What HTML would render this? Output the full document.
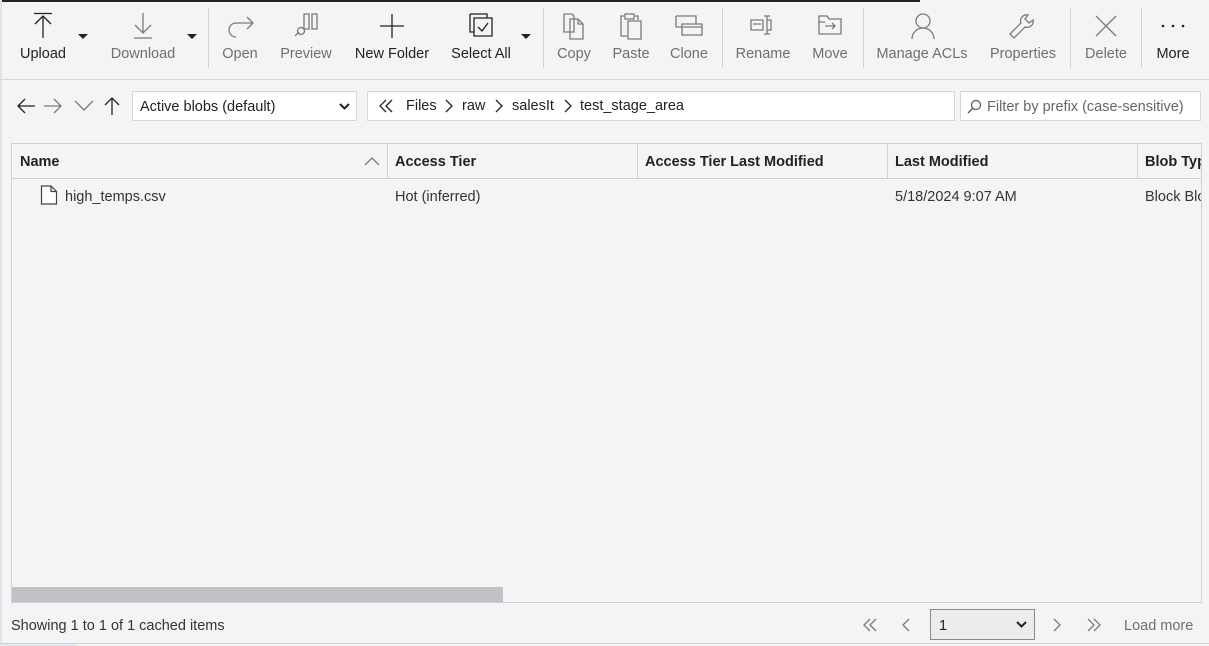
<!DOCTYPE html>
<html><head><meta charset="utf-8"><style>
*{box-sizing:border-box;margin:0;padding:0}
body{width:1209px;height:646px;background:#f4f4f4;font-family:"Liberation Sans",sans-serif;font-size:14px;color:#222;position:relative;overflow:hidden}
.a{position:absolute}
.lbl{position:absolute;top:46px;font-size:14.5px;transform:translateX(-50%);white-space:nowrap;color:#6f6f6f}
.en{color:#222}
.sep{position:absolute;top:8px;width:1px;height:60px;background:#d4d4da}
svg{position:absolute;overflow:visible}
.ic{fill:none;stroke:#7a7a7a;stroke-width:1.3}
.ice{fill:none;stroke:#222;stroke-width:1.3}
.th{position:absolute;top:145px;height:34px;line-height:34px;font-weight:bold;padding-left:8px;font-size:14.5px}
.cs{position:absolute;top:144px;width:1px;height:34px;background:#d0d0dc}
.bc{position:absolute;top:98px;font-size:14.5px}
</style></head><body>
<div class="a" style="left:0;top:0;width:920px;height:2px;background:#222"></div>
<div class="a" style="left:0;top:0;width:2px;height:646px;background:#dfe3ee"></div>
<div class="a" style="left:0;top:79px;width:1209px;height:1px;background:#d6d6dc"></div>

<svg style="left:30px;top:12px" width="26" height="28"><path class="ice" d="M4 1.5H22M13 4V26M5 12L13 4L21 12"/></svg>
<svg style="left:78px;top:34px" width="10" height="6"><path d="M0 0H10L5 5Z" fill="#222"/></svg>
<svg style="left:130px;top:12px" width="26" height="28"><path class="ic" d="M13 1V21M5 13L13 21L21 13M4 26H22"/></svg>
<svg style="left:187px;top:34px" width="10" height="6"><path d="M0 0H10L5 5Z" fill="#222"/></svg>
<div class="sep" style="left:208px"></div>
<svg style="left:227px;top:14px" width="28" height="24"><path class="ic" d="M26 9H9A7 7 0 0 0 9 23M20 3L26 9L20 15"/></svg>
<svg style="left:294px;top:12px" width="26" height="26"><path class="ic" d="M10 2H15V17H10ZM18 2H23V17H18ZM5 20L1 24"/><circle class="ic" cx="7" cy="19" r="3.5"/></svg>
<svg style="left:379px;top:13px" width="26" height="26"><path class="ice" d="M13 1V25M1 13H25"/></svg>
<svg style="left:468px;top:12px" width="28" height="28"><path class="ice" d="M2 2H19V6M6 6H24V24H6ZM2 2V20H6M10 15L14 19L20 11"/></svg>
<svg style="left:521px;top:34px" width="10" height="6"><path d="M0 0H10L5 5Z" fill="#222"/></svg>
<div class="sep" style="left:543px"></div>
<svg style="left:562px;top:12px" width="26" height="28"><path class="ic" d="M2 2H10L12 4V20H2ZM8 7H16L21 12V27H8ZM16 7V12H21"/></svg>
<svg style="left:618px;top:12px" width="26" height="28"><path class="ic" d="M6 4H3V24H9M17 4H20V8M7 2H16V7H7ZM10 9H23V27H10Z"/></svg>
<svg style="left:674px;top:14px" width="30" height="24"><path class="ic" d="M2 2H22V10M2 2V13H8M8 10H28V21H8ZM8 13H28"/></svg>
<div class="sep" style="left:722px"></div>
<svg style="left:749px;top:14px" width="30" height="24"><path class="ic" d="M2 6H14V16H2ZM4 10H12M18 6H22V16H18M15 2H21M15 20H21M18 2V20"/></svg>
<svg style="left:817px;top:14px" width="28" height="24"><path class="ic" d="M2 2H10L12 5H24V20H2ZM2 8H8M8 12H18M15 9L18 12L15 15"/></svg>
<div class="sep" style="left:863px"></div>
<svg style="left:910px;top:12px" width="26" height="28"><circle class="ic" cx="13" cy="9" r="7"/><path class="ic" d="M2 27A11 11 0 0 1 24 27"/></svg>
<svg style="left:1008px;top:12px" width="28" height="28"><path class="ic" d="M2 22L13 11A6 6 0 0 1 20 3L17 7L21 11L25 8A6 6 0 0 1 17 15L6 26Z"/></svg>
<div class="sep" style="left:1070px"></div>
<svg style="left:1095px;top:15px" width="22" height="22"><path class="ic" d="M1 1L21 21M21 1L1 21"/></svg>
<div class="sep" style="left:1141px"></div>
<svg style="left:1160px;top:24px" width="28" height="4"><circle cx="3" cy="2" r="1.3" fill="#222"/><circle cx="13" cy="2" r="1.3" fill="#222"/><circle cx="23" cy="2" r="1.3" fill="#222"/></svg>

<div class="lbl en" style="left:43px">Upload</div>
<div class="lbl" style="left:143px">Download</div>
<div class="lbl" style="left:240px">Open</div>
<div class="lbl" style="left:306px">Preview</div>
<div class="lbl en" style="left:392px">New Folder</div>
<div class="lbl en" style="left:481px">Select All</div>
<div class="lbl" style="left:574px">Copy</div>
<div class="lbl" style="left:631px">Paste</div>
<div class="lbl" style="left:689px">Clone</div>
<div class="lbl" style="left:763px">Rename</div>
<div class="lbl" style="left:830px">Move</div>
<div class="lbl" style="left:922px">Manage ACLs</div>
<div class="lbl" style="left:1023px">Properties</div>
<div class="lbl" style="left:1106px">Delete</div>
<div class="lbl en" style="left:1173px">More</div>

<svg style="left:16px;top:97px" width="20" height="18"><path class="ice" d="M19 9H2M9 2L2 9L9 16"/></svg>
<svg style="left:43px;top:97px" width="20" height="18"><path class="ic" d="M1 9H18M11 2L18 9L11 16"/></svg>
<svg style="left:74px;top:100px" width="20" height="12"><path class="ic" d="M1 1L10 10L19 1"/></svg>
<svg style="left:103px;top:96px" width="18" height="20"><path class="ice" d="M9 19V2M2 9L9 2L16 9"/></svg>
<div class="a" style="left:132px;top:91px;width:225px;height:30px;background:#fff;border:1px solid #d6d6dc;padding:7px 7px;font-size:14.5px">Active blobs (default)</div>
<svg style="left:339px;top:103px" width="11" height="7"><path d="M1 1L5.5 5.5L10 1" fill="none" stroke="#222" stroke-width="2"/></svg>
<div class="a" style="left:367px;top:91px;width:588px;height:30px;background:#fff;border:1px solid #d6d6dc"></div>
<svg style="left:378px;top:99px" width="16" height="14"><path class="ice" d="M8 1L2 7L8 13M14 1L8 7L14 13"/></svg>
<div class="bc" style="left:406px">Files</div>
<svg style="left:445px;top:99px" width="8" height="14"><path class="ice" d="M1 1L7 7L1 13"/></svg>
<div class="bc" style="left:462px">raw</div>
<svg style="left:495px;top:99px" width="8" height="14"><path class="ice" d="M1 1L7 7L1 13"/></svg>
<div class="bc" style="left:512px">salesIt</div>
<svg style="left:564px;top:99px" width="8" height="14"><path class="ice" d="M1 1L7 7L1 13"/></svg>
<div class="bc" style="left:580px">test_stage_area</div>
<div class="a" style="left:960px;top:91px;width:241px;height:30px;background:#fff;border:1px solid #d6d6dc;padding:7px 0 0 26px;font-size:14.5px;color:#666">Filter by prefix (case-sensitive)</div>
<svg style="left:966px;top:99px" width="16" height="16"><circle cx="10" cy="6" r="4.5" fill="none" stroke="#555" stroke-width="1.2"/><path d="M7 9L2 14" stroke="#555" stroke-width="1.3"/></svg>

<div class="a" style="left:11px;top:143px;width:1191px;height:460px;border:1px solid #d0d0dc;border-right:none"></div>
<div class="a" style="left:12px;top:178px;width:1190px;height:1px;background:#d0d0dc"></div>
<div class="th" style="left:12px">Name</div>
<svg style="left:364px;top:157px" width="16" height="9"><path class="ic" d="M1 8L8 1L15 8"/></svg>
<div class="cs" style="left:387px"></div>
<div class="th" style="left:387px">Access Tier</div>
<div class="cs" style="left:637px"></div>
<div class="th" style="left:637px">Access Tier Last Modified</div>
<div class="cs" style="left:887px"></div>
<div class="th" style="left:887px">Last Modified</div>
<div class="cs" style="left:1137px"></div>
<div class="th" style="left:1137px;width:64px;overflow:hidden;white-space:nowrap">Blob Type</div>
<div class="a" style="left:1201px;top:143px;width:1px;height:460px;background:#d0d0dc"></div>
<svg style="left:40px;top:185px" width="18" height="20"><path d="M1.5 1H11L16.5 6.5V19H1.5ZM11 1V6.5H16.5" fill="#fff" stroke="#444" stroke-width="1.2"/></svg>
<div class="a" style="left:65px;top:189px;font-size:14.5px;color:#333">high_temps.csv</div>
<div class="a" style="left:395px;top:189px;font-size:14.5px;color:#333">Hot (inferred)</div>
<div class="a" style="left:895px;top:189px;font-size:14.5px;color:#333">5/18/2024 9:07 AM</div>
<div class="a" style="left:1145px;top:189px;width:56px;overflow:hidden;white-space:nowrap;font-size:14.5px;color:#333">Block Blob</div>
<div class="a" style="left:12px;top:587px;width:491px;height:15px;background:#c1c1c6"></div>

<div class="a" style="left:11px;top:618px;font-size:14.5px;color:#333">Showing 1 to 1 of 1 cached items</div>
<svg style="left:862px;top:618px" width="16" height="14"><path class="ic" d="M8 1L2 7L8 13M14 1L8 7L14 13"/></svg>
<svg style="left:901px;top:618px" width="10" height="14"><path class="ic" d="M8 1L2 7L8 13"/></svg>
<div class="a" style="left:930px;top:609px;width:105px;height:31px;background:#ececec;border:1px solid #8a8a8a;padding:8px 8px;font-size:14.5px">1</div>
<svg style="left:1016px;top:621px" width="11" height="7"><path d="M1 1L5.5 5.5L10 1" fill="none" stroke="#222" stroke-width="2"/></svg>
<svg style="left:1052px;top:618px" width="10" height="14"><path class="ic" d="M2 1L8 7L2 13"/></svg>
<svg style="left:1086px;top:618px" width="16" height="14"><path class="ic" d="M2 1L8 7L2 13M8 1L14 7L8 13"/></svg>
<div class="a" style="left:1124px;top:618px;font-size:14.5px;color:#6f6f6f">Load more</div>
<div class="a" style="left:0;top:643px;width:1209px;height:1px;background:#d0d0dc"></div>
<div class="a" style="left:0;top:644px;width:76px;height:2px;background:#e4e8f2"></div>
</body></html>
